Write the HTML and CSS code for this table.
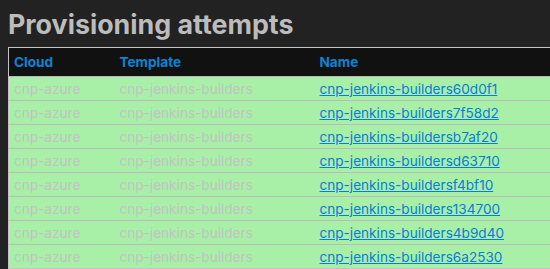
FILE: index.html
```html
<!DOCTYPE html>
<html lang="en">
<head>
  <meta charset="UTF-8">
  <title>Provisioning attempts</title>
  <link rel="stylesheet" href="styles.css">
</head>
<body>

  <h1 class="page-title">Provisioning attempts</h1>

  <table class="attempts">
    <thead>
      <tr>
        <th class="col-cloud">Cloud</th>
        <th class="col-template">Template</th>
        <th class="col-name">Name</th>
      </tr>
    </thead>
    <tbody>
      <tr class="ok">
        <td>cnp-azure</td>
        <td>cnp-jenkins-builders</td>
        <td><a href="#">cnp-jenkins-builders60d0f1</a></td>
      </tr>
      <tr class="ok">
        <td>cnp-azure</td>
        <td>cnp-jenkins-builders</td>
        <td><a href="#">cnp-jenkins-builders7f58d2</a></td>
      </tr>
      <tr class="ok">
        <td>cnp-azure</td>
        <td>cnp-jenkins-builders</td>
        <td><a href="#">cnp-jenkins-buildersb7af20</a></td>
      </tr>
      <tr class="ok">
        <td>cnp-azure</td>
        <td>cnp-jenkins-builders</td>
        <td><a href="#">cnp-jenkins-buildersd63710</a></td>
      </tr>
      <tr class="ok">
        <td>cnp-azure</td>
        <td>cnp-jenkins-builders</td>
        <td><a href="#">cnp-jenkins-buildersf4bf10</a></td>
      </tr>
      <tr class="ok">
        <td>cnp-azure</td>
        <td>cnp-jenkins-builders</td>
        <td><a href="#">cnp-jenkins-builders134700</a></td>
      </tr>
      <tr class="ok">
        <td>cnp-azure</td>
        <td>cnp-jenkins-builders</td>
        <td><a href="#">cnp-jenkins-builders4b9d40</a></td>
      </tr>
      <tr class="ok">
        <td>cnp-azure</td>
        <td>cnp-jenkins-builders</td>
        <td><a href="#">cnp-jenkins-builders6a2530</a></td>
      </tr>
    </tbody>
  </table>

</body>
</html>
```

FILE: styles.css
```css
* {
  margin: 0;
  padding: 0;
  box-sizing: border-box;
}

body {
  font-family: Inter, 'Noto Sans', sans-serif;
  background-color: #222222;
  color: #bbbbbb;
  padding: 8px;
  overflow: hidden;
}

.page-title {
  font-size: 26.8px;
  font-weight: 700;
  color: #bcbcbc;
  line-height: 32px;
  margin-bottom: 7px;
}

.attempts {
  border-collapse: collapse;
  border: 1px solid #c4c4c4;
  width: 640px;
  font-size: 13.6px;
}

.attempts th {
  background-color: #111111;
  color: #0a84d4;
  font-weight: 700;
  text-align: left;
  height: 29px;
  padding: 0 5px;
}

.col-cloud { width: 106px; }
.col-template { width: 200px; }

.attempts td {
  height: 24px;
  padding: 0 5px;
  border-top: 1px solid #bababa;
  color: #c2c2c2;
}

.attempts tr.ok td {
  background-color: #a8f0a8;
}

.attempts a {
  color: #0a7cd6;
  text-decoration: underline;
}
```
